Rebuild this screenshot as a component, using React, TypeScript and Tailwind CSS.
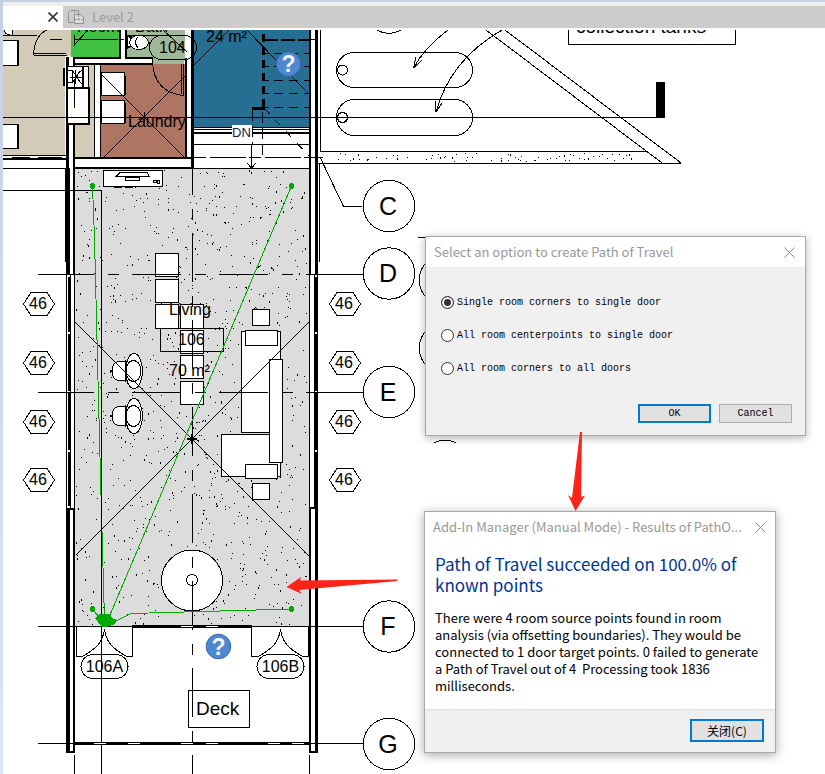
import React, { useState } from 'react';

interface Point {
  x: number;
  y: number;
}

const OPTIONS = [
  'Single room corners to single door',
  'All room centerpoints to single door',
  'All room corners to all doors',
];

const GRIDS = [
  { name: 'C', y: 206 },
  { name: 'D', y: 273.5 },
  { name: 'E', y: 392 },
  { name: 'F', y: 626.5 },
  { name: 'G', y: 744 },
];

const WINDOW_TAGS = [304, 363, 422, 480];

// small seeded generator, so the stipple is the same on every render
const stipple = (x: number, y: number, w: number, h: number, count: number, start: number) => {
  let seed = start;
  const next = () => {
    seed = (seed + 0x6d2b79f5) | 0;
    let t = Math.imul(seed ^ (seed >>> 15), 1 | seed);
    t = (t + Math.imul(t ^ (t >>> 7), 61 | t)) ^ t;
    return ((t ^ (t >>> 14)) >>> 0) / 4294967296;
  };

  let d = '';
  for (let i = 0; i < count; i++) {
    const px = Math.floor(x + next() * w);
    const py = Math.floor(y + next() * h);
    d += next() > 0.8 ? `M${px} ${py}h1v2h-1z` : `M${px} ${py}h1v1h-1z`;
  }
  return d;
};

const ROOM_STIPPLE = stipple(76, 170, 232, 455, 1000, 7);
const SLAB_STIPPLE = stipple(338, 153, 300, 9, 70, 21);

const GridBubble: React.FC<{ name: string; y: number }> = ({ name, y }) => (
  <g>
    <circle cx="389" cy={y} r="25.7" fill="#fff" stroke="#000" shapeRendering="crispEdges" />
    <text x="388" y={y + 8.5} fontSize="25" textAnchor="middle">
      {name}
    </text>
  </g>
);

const WindowTag: React.FC<Point> = ({ x, y }) => (
  <g transform={`translate(${x} ${y})`}>
    <path
      d="M-15.5 0L-8 -11.5H8L15.5 0L8 11.5H-8Z"
      fill="#fff"
      stroke="#000"
      shapeRendering="crispEdges"
    />
    <text x="-1" y="5" fontSize="16" textAnchor="middle">
      46
    </text>
  </g>
);

const Chair: React.FC<Point> = ({ x, y }) => (
  <g transform={`translate(${x} ${y})`} fill="#fff" stroke="#000">
    <path d="M-9 -10L-17 -9Q-22 -7 -22 0Q-22 7 -17 9L-9 10Z" />
    <path d="M-24 0h3" strokeWidth="2" />
    <ellipse cx="0" cy="0" rx="8.5" ry="17.5" />
    <ellipse cx="-0.5" cy="0" rx="7.5" ry="10.5" />
    <path d="M-8.5 -10V10" strokeWidth="2" />
  </g>
);

const HelpMark: React.FC<Point> = ({ x, y }) => (
  <g>
    <circle cx={x} cy={y} r="12.3" fill="#4d88d2" stroke="#3c5fa8" />
    <text x={x} y={y + 8} fontSize="23" fontWeight="bold" textAnchor="middle" fill="#f4f4f4">
      ?
    </text>
  </g>
);

const DoorTag: React.FC<{ x: number; label: string }> = ({ x, label }) => (
  <g>
    <g fill="none" stroke="#000" shapeRendering="crispEdges">
      <path d={`M${x} 629Q${x - 1} 637 ${x - 5} 643T${x - 22} 656.5M${x} 629Q${x + 1} 637 ${x + 5} 643T${x + 22} 656.5`} />
      <rect x={x - 23.5} y="654.5" width="47" height="24" rx="12" />
    </g>
    <text x={x} y="672" fontSize="16" textAnchor="middle">
      {label}
    </text>
  </g>
);

const FloorPlan: React.FC = () => (
  <svg
    viewBox="3 30 822 744"
    className="block h-[744px] w-[822px] shrink-0"
    fontFamily="'Liberation Sans', Arial, sans-serif"
    fill="#000"
  >
    <g shapeRendering="crispEdges">
      {/* room fills */}
      <path d="M3 30H71V157H3ZM75 65H94V157H75Z" fill="#d3cbb7" />
      <rect x="71" y="30" width="49" height="27" fill="#41c141" />
      <rect x="127" y="30" width="58" height="31" fill="#9fb998" />
      <rect x="101" y="64" width="85" height="93" fill="#ae7562" />
      <rect x="194" y="30" width="116" height="97" fill="#266f93" />
      <rect x="75" y="168" width="235" height="458" fill="#dcdcdc" />
      <path d={ROOM_STIPPLE} />
      <path d={SLAB_STIPPLE} />

      {/* bedroom and bathroom fixtures */}
      <g fill="#fff" stroke="#000">
        <path d="M3 40.5H18V65.5H3M3 124.5H18V148.5H3" strokeWidth="1.5" />
        <path d="M4 30Q6 36 12 35L13 30" />
        <path d="M33.5 55.5Q34 36 47 30M33.5 55.5H67M34 53.5H66M3 35.5H37" fill="none" />
        <path d="M127 36L131 37V46L127 48Z" strokeWidth="2" />
        <ellipse cx="139" cy="42.5" rx="9.5" ry="7" />
        <path d="M149 42V50M138 37Q133 42 138 48" fill="none" />
        <rect x="101.5" y="72.5" width="23" height="23" />
        <rect x="101.5" y="100.5" width="23" height="23" />
        <path d="M125 76V95M125 103V123" strokeWidth="2" />
      </g>

      {/* upper walls */}
      <path d="M65 56H71V57H75V157H65Z" fill="#fff" />
      <path d="M75 58H152V64H75ZM95 64H100V157H95ZM187 30H191V157H187ZM121 30H125V58H121Z" fill="#fff" />
      <path d="M152 58H184V64H152Z" fill="#9fb998" />
      <path d="M66 57H69V274H66ZM73 57H75V168H73ZM119 30H121V58H119ZM125 30H127V58H125ZM185 58H187V157H185ZM191 30H194V168H191Z" />
      <path d="M75 57H121V59H75ZM125 57H153V59H125ZM75 63H153V65H75ZM94 64H95V157H94ZM100 64H101V157H100ZM75 157H193V159H75ZM75 167H194V169H75ZM3 158H66V160H3ZM3 168H66V169H3Z" />
      <path d="M3 155.500H66" stroke="#000" />
      <path d="M3 156H66V158H3Z" fill="#fff" />
      <path d="M12 157H30M38 157H62" stroke="#000" />
      <path d="M152.500 58V64" stroke="#000" />
      <g fill="#fff" stroke="#000">
        <path d="M67 66.500H88.500V87.500H67Z" />
        <path d="M82.500 66V87M64 68V86" strokeWidth="2" />
        <path d="M67 70H72V82H67ZM72 70L77 77L72 83M82 70Q73 76 82 84M70 77H82M75 70V84" />
        <path d="M67 88H89V124H67Z" strokeWidth="2" />
      </g>

      {/* laundry door and tag outline */}
      <g fill="none" stroke="#000">
        <path d="M152.500 62Q154 92 183 95.500V64M181.500 64V94" />
        <rect x="149.500" y="35.500" width="47" height="24" rx="12" />
        <path d="M101.500 74.500L184.500 157.500M185.500 75.500L103.500 157.500" />
        <path d="M163 30L187 52M75 44L88 30M74.500 35V46" />
        <path d="M139 117.500H149M144.500 112V122M140 113L148 121M148 113L140 121" />
        <path d="M50 39.500H62M75 39.500H118M121 39.500H124M128 35.500H170" />
        <path d="M74.500 79V108" />
        <path d="M3 117.500H664" />
      </g>

      {/* stairs */}
      <g fill="none" stroke="#000">
        <path d="M194 65L229 30M247 30L276 60M292 77L309 94" />
        <path d="M263.500 34V108" strokeWidth="3" strokeDasharray="8 5" />
        <path d="M252 108.500H265" strokeWidth="3" />
        <path d="M264 40H310" strokeWidth="2" strokeDasharray="14 3" />
        <path d="M263 53.500H269M263 66.500H269M263 80.500H269M263 93.500H269M263 107.500H269" />
        <path d="M274 53.500H310M274 66.500H310M274 80.500H310M274 93.500H310M274 107.500H310" strokeDasharray="9 6" />
        <path d="M264 108L309 156" strokeDasharray="8 8" />
        <path d="M194 127.500H310M194 129.500H310M194 144.500H310M194 168.500H310" />
        <path d="M194 133H310" strokeWidth="2" />
        <path d="M194 157.500H310" strokeDasharray="12 4 36 3" />
        <path d="M252.500 110V144M262.500 112V157" strokeDasharray="11 5" />
        <path d="M251.500 144V168M247 163L251.500 168L256 163" />
      </g>

      {/* right wall */}
      <path d="M310 30H316V752H310Z" fill="#fff" />
      <path d="M309 30H311V275H309ZM315 30H318V275H315ZM309 275H310V508H309ZM314 275H318V508H314ZM309 508H311V752H309ZM315 508H318V752H315ZM309 507H315V509H309ZM309 751H318V753H309Z" />
      <path d="M311 39.500H315M311 117.500H315M320.500 30V151M319.500 164V262M311 157.500H323" stroke="#000" />

      {/* left wall */}
      <path d="M66 275H74V508H66ZM70 508H73V752H70Z" fill="#fff" />
      <path d="M65 168H70V262H65ZM66 262H70V275H66ZM73 168H75V275H73ZM66 275H67V508H66ZM68 275H71V508H68ZM74 275H75V626H74ZM66 508H70V752H66ZM73 508H75V752H73ZM66 508H75V510H66ZM66 751H75V753H66Z" />
      <path
        d="M67 276h3M67 333h3M67 392h3M67 451h3M67 507h3M315 276h2M315 333h2M315 392h2M315 451h2"
        stroke="#fff"
        strokeWidth="2"
      />

      {/* tanks */}
      <g fill="none" stroke="#000">
        <rect x="336.500" y="52.500" width="136" height="35" rx="17.500" />
        <rect x="336.500" y="99.500" width="136" height="36" rx="18" />
        <circle cx="342.500" cy="70" r="5" />
        <circle cx="342.500" cy="117.500" r="5" strokeWidth="1.500" />
        <path d="M377 30Q389 37 401 30M448 30Q424 48 413.500 68M413.500 68L416 57M413.500 68L422 60" />
        <path d="M502 30Q450 60 436 112M436 112L435.500 101M436 112L442 103" />
        <path d="M486 30L662 163M505 30L681 163" />
        <path d="M320 151.500H648M316 163.500H681" />
        <path d="M320 157L343.500 206.500H362" />
        <path d="M568.500 30V44.500H735.500V30" />
      </g>
      <rect x="656" y="82" width="9" height="36" />

      {/* TV cabinet */}
      <g fill="#fff" stroke="#000">
        <rect x="103.500" y="170.500" width="59" height="16" />
        <path d="M116 176.500L120 172.500H147L149.500 176.500ZM125.500 177.500H139.500V180.500H125.500Z" />
        <circle cx="155" cy="181.500" r="1.500" />
        <circle cx="158.500" cy="182" r="1.500" />
        <path d="M114 187.500H122M125 187.500H133" />
      </g>

      {/* kitchen units, sofa and seats */}
      <g fill="#fff" stroke="#000">
        <path d="M155.500 253.500h23v23h-23zM155.500 279.500h23v23h-23zM155.500 304.500h23v24h-23zM180.500 304.500h23v24h-23zM180.500 330.500h23v23h-23zM180.500 355.500h23v23h-23zM180.500 381.500h23v23h-23z" />
        <path d="M252.500 309.500h17v16h-17zM252.500 483.500h17v16h-17z" />
        <path d="M241.500 331.500H280.500V432.500H241.500ZM221.500 434.500H280.500V476.500H221.500Z" />
        <path d="M245.500 330.500h32v15h-32zM245.500 464.500h32v14h-32z" />
        <rect x="269.500" y="359.500" width="13" height="103" rx="1" />
        <circle cx="192" cy="580.500" r="30.500" />
        <circle cx="192" cy="580" r="5.500" />
      </g>
      <Chair x={134} y={371} />
      <Chair x={134} y={416} />

      {/* room separation and grid lines */}
      <g fill="none" stroke="#000">
        <rect x="160.500" y="328.500" width="63" height="23" />
        <path d="M75.500 322.500L309.500 556.500M309.500 321.500L75.500 555.500" />
        <path d="M187 439H197M192 434V444" strokeWidth="2" />
        <path d="M189 436L195 442M195 436L189 442" />
        <path d="M3 190.500H101.500V774M74.500 755V774M309.500 755V774" />
        <path d="M192.500 168V774" strokeDasharray="49 14 11 13" strokeDashoffset="22" />
        <path d="M38 274.500H45M38 392.500H45M355 274.500H363M355 392.500H363" />
        <path d="M45 274.500H355M45 392.500H355" strokeDasharray="49 14 11 13" />
        <path d="M38 626.500H132M252 626.500H363M38 743.500H75M310 743.500H363" />
        <path d="M76.500 626V656.500H83M132.500 626V656.500H126M251.500 626V656.500H258M308.500 626V656.500H302" />
      </g>
      <path d="M132 625H252V628H132ZM75 742H309V745H75Z" />
      <path d="M181 626.500H193M206 626.500H218M94 743.500H106M128 743.500H140M181 743.500H193M206 743.500H218M268 743.500H280M292 743.500H304" stroke="#fff" strokeWidth="1" />

      {/* pieces next to the option window */}
      <g fill="none" stroke="#000">
        <path d="M418 237.500H426M483 236.500H491M538 236.500H541M604 236.500H606M693 236.500H696M717 236.500H718M735 236.500H736" />
        <circle cx="445" cy="280" r="25.700" />
        <circle cx="445" cy="348" r="25.700" />
        <path d="M434 442.500Q445 438 456 442.500" />
      </g>

      {/* travel paths */}
      <g fill="none" stroke="#00a800">
        <path d="M92.500 186L94.500 238L98 380L101 495M102 531L104.500 620M291.500 186L107 622M291.500 609L131 613.500L108 625M92.500 609L103 622" />
      </g>
      <g fill="#00a800">
        <circle cx="92.500" cy="186" r="3" />
        <circle cx="291.500" cy="186" r="3" />
        <circle cx="92.500" cy="609" r="3" />
        <circle cx="291.500" cy="609" r="3" />
        <path d="M95 618L100 614H110L112 618L117 620L115 624L106 627H102Z" />
      </g>
    </g>

    <rect x="232" y="125" width="20" height="14" fill="#fff" />
    <text x="232" y="137" fontSize="13" fill="#1a1a50">
      DN
    </text>
    <rect x="188.500" y="690.500" width="61" height="37" fill="#fff" stroke="#000" shapeRendering="crispEdges" />
    <path d="M192.500 691V717" stroke="#000" shapeRendering="crispEdges" />

    <g fontSize="16">
      <text x="77" y="32">Room</text>
      <text x="135" y="32">Bath</text>
      <text x="159" y="53">104</text>
      <text x="206" y="42">24 m²</text>
      <text x="128" y="127">Laundry</text>
      <text x="169" y="315">Living</text>
      <text x="178" y="345">106</text>
      <text x="169" y="376">70 m²</text>
    </g>
    <text x="196" y="715" fontSize="19">
      Deck
    </text>
    <text x="576" y="33" fontSize="19">
      collection tanks
    </text>

    <DoorTag x={104.5} label="106A" />
    <DoorTag x={280.5} label="106B" />
    {GRIDS.map((grid) => (
      <GridBubble key={grid.name} name={grid.name} y={grid.y} />
    ))}
    {WINDOW_TAGS.map((y) => (
      <g key={y}>
        <WindowTag x={39} y={y} />
        <WindowTag x={345} y={y} />
      </g>
    ))}
    <HelpMark x={288.5} y={64} />
    <HelpMark x={218.5} y={646.5} />
  </svg>
);

const CloseButton: React.FC = () => (
  <button type="button" aria-label="Close" className="flex size-4 items-center justify-center">
    <svg viewBox="0 0 11 11" className="size-[11px]" fill="none" stroke="#8a8a8a">
      <path d="M0.500 0.500L10.500 10.500M10.500 0.500L0.500 10.500" />
    </svg>
  </button>
);

const OptionWindow: React.FC = () => {
  const [option, setOption] = useState<string>(OPTIONS[0]);

  return (
    <form className="absolute top-[206px] left-[422px] w-[381px] border border-[#a9a9a9] bg-[#f0f0f0] shadow-[0_2px_8px_rgba(0,0,0,0.3)]">
      <div className="flex h-[30px] items-center justify-between bg-white pr-2 pl-2 text-[13px] text-[#999]">
        <h2>Select an option to create Path of Travel</h2>
        <CloseButton />
      </div>

      <div className="flex flex-col gap-5 px-[15px] pt-[29px] font-['Liberation_Mono',monospace] text-[10px] leading-[13px] text-black">
        {OPTIONS.map((label) => (
          <label key={label} className="flex items-center gap-[3px]">
            <input
              type="radio"
              name="option"
              checked={option === label}
              onChange={() => setOption(label)}
              className="size-[13px] appearance-none rounded-full border border-[#333] bg-white checked:bg-[#333] checked:shadow-[inset_0_0_0_2px_white]"
            />
            {label}
          </label>
        ))}
      </div>

      <div className="flex justify-end gap-2 px-[13px] pt-[29px] pb-3 font-['Liberation_Mono',monospace] text-[10px] text-black">
        <button type="button" className="h-[19px] w-[73px] border-2 border-[#0078d7] bg-[#e1e1e1] leading-none">
          OK
        </button>
        <button type="button" className="h-[19px] w-[73px] border border-[#adadad] bg-[#e1e1e1] leading-none">
          Cancel
        </button>
      </div>
    </form>
  );
};

const ResultWindow: React.FC = () => (
  <section className="absolute top-[481px] left-[421px] w-[352px] border border-[#a9a9a9] bg-white shadow-[0_2px_10px_rgba(0,0,0,0.35)]">
    <div className="flex h-[30px] items-center justify-between pr-[7px] pl-2 text-[13px] text-[#999]">
      <h2>Add-In Manager (Manual Mode) - Results of PathO...</h2>
      <CloseButton />
    </div>

    <div className="px-[10px] pt-[11px] pb-[15px]">
      <p className="text-[17px] leading-[21px] text-[#003399]">
        Path of Travel succeeded on 100.0% of
        <br />
        known points
      </p>
      <p className="mt-[14px] text-[13px] leading-[17px] text-black">
        There were 4 room source points found in room
        <br />
        analysis (via offsetting boundaries). They would be
        <br />
        connected to 1 door target points. 0 failed to generate
        <br />a Path of Travel out of 4&nbsp; Processing took 1836
        <br />
        milliseconds.
      </p>
    </div>

    <div className="flex justify-end border-t border-[#dfdfdf] bg-[#f0f0f0] px-[11px] pt-[9px] pb-[10px]">
      <button
        type="button"
        className="h-[23px] w-[74px] border-2 border-[#0078d7] bg-[#e1e1e1] text-[12px] leading-none text-black"
      >
        关闭(C)
      </button>
    </div>
  </section>
);

const Arrows: React.FC = () => (
  <svg
    viewBox="3 30 822 744"
    className="pointer-events-none absolute top-0 left-0 h-[744px] w-[822px]"
    fill="#fe2318"
  >
    <path d="M580 432H582L581 497L585 495.500L575.500 511L568 495L572 498Z" />
    <path d="M286.500 587L301 577L300 580.500L397.500 579.500V581L299 590L302 594Z" />
  </svg>
);

const TabBar: React.FC = () => (
  <nav className="flex h-[22px] bg-[#cccccc] text-[13px]">
    <div className="flex w-[60px] items-center justify-end bg-white pr-1">
      <button type="button" aria-label="Close view" className="flex size-3 items-center justify-center">
        <svg viewBox="0 0 10 10" className="size-[10px]" fill="none" stroke="#333" strokeWidth="1.600">
          <path d="M0.500 0.500L9.500 9.500M9.500 0.500L0.500 9.500" />
        </svg>
      </button>
    </div>
    <a href="#level-2" className="flex items-center gap-2 pl-[5px] text-[#9b9b9b]">
      <svg viewBox="0 0 16 14" className="h-[14px] w-4" fill="none" stroke="#8f8f8f">
        <path d="M6.500 12.500H0.500V2.500L2.500 0.500H10.500V4" />
        <path d="M6.500 4.500H12.500L15.500 7.500V13.500H6.500Z" fill="#ddd" />
        <path d="M6.500 1V4M10.500 5V9.500M7 9.500H15" strokeDasharray="2 1" />
      </svg>
      Level 2
    </a>
  </nav>
);

export default function App() {
  return (
    <div className="flex min-h-screen bg-white font-['Noto_Sans_CJK_SC','Noto_Sans',sans-serif]">
      <div className="w-[3px] shrink-0 bg-linear-to-b from-[#c5d0e6] to-[#dbe5f3]" />
      <div className="flex min-w-0 flex-1 flex-col">
        <div className="h-[2px] bg-[#c5d0e3]" />
        <div className="h-1 bg-[#eeeeec]" />
        <TabBar />
        <main className="relative mt-[2px] flex-1 overflow-hidden">
          <FloorPlan />
          <OptionWindow />
          <ResultWindow />
          <Arrows />
        </main>
      </div>
    </div>
  );
}
